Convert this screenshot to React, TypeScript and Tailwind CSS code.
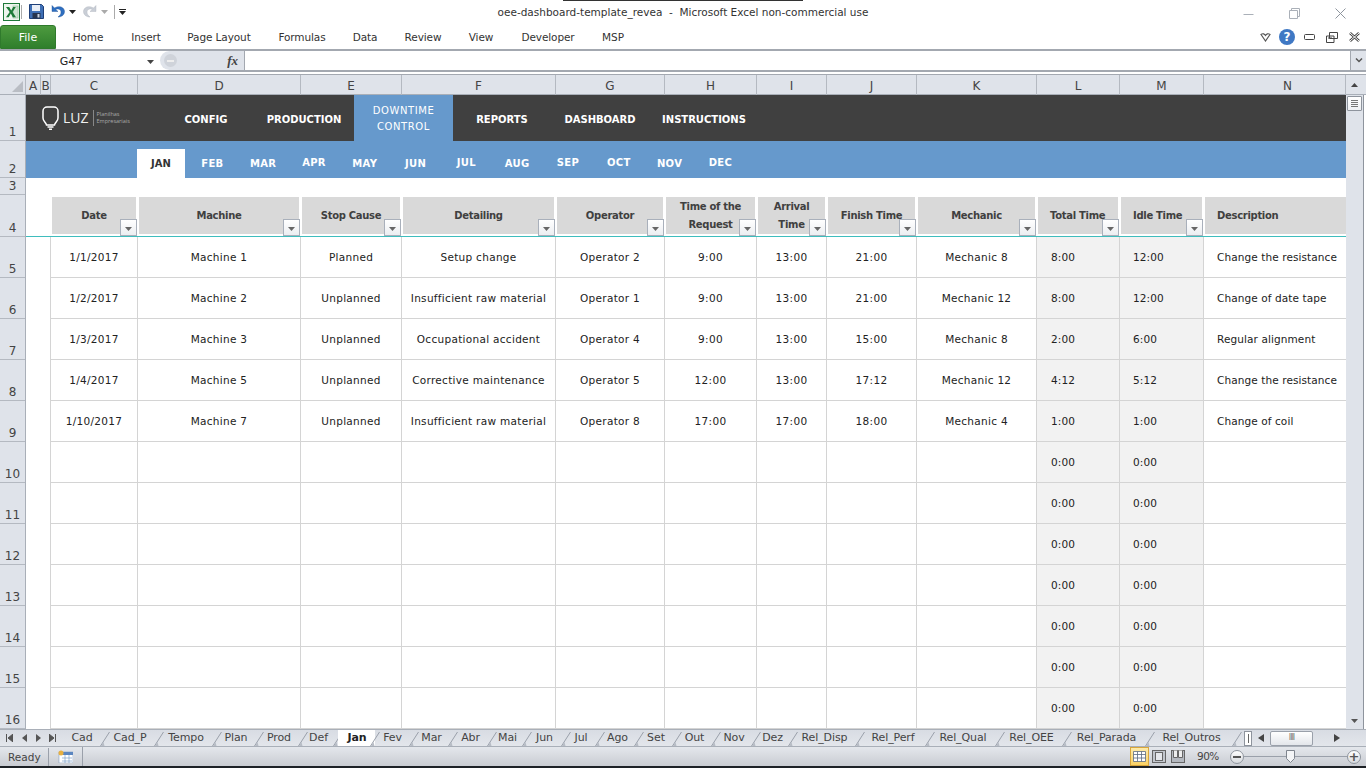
import type { ReactNode } from 'react'

const colLetters = ['A', 'B', 'C', 'D', 'E', 'F', 'G', 'H', 'I', 'J', 'K', 'L', 'M', 'N']

const grid = 'grid grid-cols-[15px_10px_87px_163px_101px_154px_109px_92px_70px_90px_120px_83px_84px_142px]'

const ribbonTabs = [
  ['Home', 'w-[64px]'], ['Insert', 'w-[52px]'], ['Page Layout', 'w-[94px]'], ['Formulas', 'w-[72px]'], ['Data', 'w-[54px]'],
  ['Review', 'w-[62px]'], ['View', 'w-[54px]'], ['Developer', 'w-[80px]'], ['MSP', 'w-[50px]'],
]

const rowHeaders = [
  ['1', 'h-[46px]'], ['2', 'h-[37px]'], ['3', 'h-[17px]'], ['4', 'h-[42px]'],
  ['5', 'h-[41px]'], ['6', 'h-[41px]'], ['7', 'h-[41px]'], ['8', 'h-[41px]'], ['9', 'h-[41px]'], ['10', 'h-[41px]'],
  ['11', 'h-[41px]'], ['12', 'h-[41px]'], ['13', 'h-[41px]'], ['14', 'h-[41px]'], ['15', 'h-[41px]'], ['16', 'h-[41px]'],
]

const months: [string, boolean][] = [
  ['FEB', false], ['MAR', false], ['APR', true], ['MAY', false], ['JUN', false], ['JUL', true],
  ['AUG', false], ['SEP', true], ['OCT', true], ['NOV', false], ['DEC', true],
]

const headers = [
  { label: 'Date' },
  { label: 'Machine' },
  { label: 'Stop Cause' },
  { label: 'Detailing' },
  { label: 'Operator' },
  { label: 'Time of the Request', wrap: true },
  { label: 'Arrival Time', wrap: true },
  { label: 'Finish Time' },
  { label: 'Mechanic' },
  { label: 'Total Time', left: true },
  { label: 'Idle Time', left: true },
  { label: 'Description', left: true, noFilter: true },
]

const data = [
  ['1/1/2017', 'Machine 1', 'Planned', 'Setup change', 'Operator 2', '9:00', '13:00', '21:00', 'Mechanic 8', '8:00', '12:00', 'Change the resistance'],
  ['1/2/2017', 'Machine 2', 'Unplanned', 'Insufficient raw material', 'Operator 1', '9:00', '13:00', '21:00', 'Mechanic 12', '8:00', '12:00', 'Change of date tape'],
  ['1/3/2017', 'Machine 3', 'Unplanned', 'Occupational accident', 'Operator 4', '9:00', '13:00', '15:00', 'Mechanic 8', '2:00', '6:00', 'Regular alignment'],
  ['1/4/2017', 'Machine 5', 'Unplanned', 'Corrective maintenance', 'Operator 5', '12:00', '13:00', '17:12', 'Mechanic 12', '4:12', '5:12', 'Change the resistance'],
  ['1/10/2017', 'Machine 7', 'Unplanned', 'Insufficient raw material', 'Operator 8', '17:00', '17:00', '18:00', 'Mechanic 4', '1:00', '1:00', 'Change of coil'],
  ...Array.from({ length: 7 }, () => ['', '', '', '', '', '', '', '', '', '0:00', '0:00', '']),
]

const sheetTabs = [
  ['Cad', 'w-[42px]'], ['Cad_P', 'w-[54px]'], ['Tempo', 'w-[58px]'], ['Plan', 'w-[42px]'], ['Prod', 'w-[44px]'], ['Def', 'w-[35px]'],
  ['Jan', 'w-[37px]'], ['Fev', 'w-[39px]'], ['Mar', 'w-[39px]'], ['Abr', 'w-[39px]'], ['Mai', 'w-[35px]'], ['Jun', 'w-[39px]'],
  ['Jul', 'w-[34px]'], ['Ago', 'w-[39px]'], ['Set', 'w-[38px]'], ['Out', 'w-[39px]'], ['Nov', 'w-[40px]'], ['Dez', 'w-[37px]'],
  ['Rel_Disp', 'w-[67px]'], ['Rel_Perf', 'w-[70px]'], ['Rel_Qual', 'w-[70px]'], ['Rel_OEE', 'w-[67px]'], ['Rel_Parada', 'w-[83px]'], ['Rel_Outros', 'w-[87px]'],
]

function ExcelIcon() {
  return (
    <svg width="18" height="18" viewBox="0 0 18 18">
      <rect x="0.5" y="0.5" width="16" height="17" fill="#eef5ee" stroke="#1f7a3a" />
      <rect x="10" y="3" width="5" height="12" fill="#cfe5d2" stroke="#7fb08a" strokeWidth="0.5" />
      <path d="M3 4h3.2l2 3.4L10.2 4h2.6L9.6 9l3.4 5.2H9.8L7.8 10.6 5.7 14.2H3l3.7-5.2z" fill="#1d7a37" />
    </svg>
  )
}

function SaveIcon() {
  return (
    <svg width="15" height="15" viewBox="0 0 15 15">
      <path d="M0.5 0.5h12l2 2v12h-14z" fill="#3f6fb5" stroke="#1f3f78" />
      <rect x="3" y="1" width="8" height="6" fill="#e9eef6" />
      <rect x="3.5" y="9" width="8" height="5.5" fill="#26344f" />
      <rect x="8.5" y="10" width="2" height="3.5" fill="#c8d2e2" />
    </svg>
  )
}

function UndoIcon({ color, dark }: { color: string; dark: string }) {
  return (
    <svg width="14" height="15" viewBox="0 0 14 15">
      <path d="M1 1.5v6h6L4.8 5.4C7 4.2 10 5.2 10 8c0 2-1 3.5-3 5 4 0 6.5-2.5 6.5-5.5C13.5 3.5 8.5 1 3.5 4z" fill={color} stroke={dark} strokeWidth="0.4" />
    </svg>
  )
}

function Caret({ color = '#222', className = '' }: { color?: string; className?: string }) {
  return (
    <svg width="7" height="4" viewBox="0 0 7 4" className={className}>
      <path d="M0 0h7L3.5 4z" fill={color} />
    </svg>
  )
}

function FilterButton() {
  return (
    <div className="absolute right-[1px] bottom-0 flex h-[17px] w-[17px] items-center justify-center border border-[#a9b0bb] bg-gradient-to-b from-white to-[#eceef1]">
      <Caret color="#666" className="mt-[2px]" />
    </div>
  )
}

function Logo() {
  return (
    <div className="flex h-full w-[140px] items-center pl-[16px] pb-[1px]">
      <svg width="17" height="24" viewBox="0 0 17 24">
        <path d="M5 1h7a4 4 0 0 1 4 4v7c0 3.5-3 4-3.5 7h-8C4 16 1 15.5 1 12V5a4 4 0 0 1 4-4z" fill="none" stroke="#fff" strokeWidth="1.5" />
        <path d="M5.5 21h6M7 23.3h3" stroke="#fff" strokeWidth="1.5" />
      </svg>
      <span className="ml-[4px] font-['Open_Sans',sans-serif] text-[14px] leading-none text-[#f0f0f0]">LUZ</span>
      <span className="ml-[4px] mr-[3px] h-[16px] w-px bg-[#888]" />
      <span className="font-['Open_Sans',sans-serif] text-[5.5px] leading-[6.5px] text-[#aaa]">Planilhas<br />Empresariais</span>
    </div>
  )
}

function NavItem({ className, children }: { className: string; children: ReactNode }) {
  return <div className={`flex h-full items-center justify-center pt-[2px] text-[10px] font-bold text-white ${className}`}>{children}</div>
}

function SheetTab({ label, width, active }: { label: string; width: string; active: boolean }) {
  return (
    <div className={`relative flex h-full shrink-0 items-center justify-center text-[11px] tracking-[-0.1px] ${width} ${active ? 'bg-white pl-[1px] font-bold text-[#222]' : 'pr-[4px] text-[#444]'}`}>
      {label}
      <svg width="10" height="15" viewBox="0 0 10 15" className="absolute right-[-5px] bottom-0">
        <path d="M0.5 15L9.5 1" stroke="#9aa0aa" strokeWidth="1" fill="none" />
        <path d="M1 15h3.5L3.5 11z" fill="#b8bdc6" />
      </svg>
    </div>
  )
}

export default function App() {
  return (
    <div className="flex h-[768px] w-[1366px] flex-col overflow-hidden bg-white font-['DejaVu_Sans',sans-serif] text-[#222]">
      {/* title bar */}
      <div className="relative flex h-[25px] shrink-0 items-center justify-center bg-white pt-[1px]">
        <div className="absolute left-[563px] top-0 h-px w-[240px] bg-[#333]" />
        <div className="absolute left-[3px] top-[3px]"><ExcelIcon /></div>
        <div className="absolute left-[21px] top-[5px] h-[14px] w-px bg-[#aaa]" />
        <div className="absolute left-[29px] top-[4px] flex items-center">
          <SaveIcon />
          <span className="ml-[7px]"><UndoIcon color="#2f6fc0" dark="#1d4f96" /></span>
          <Caret className="ml-[4px]" />
          <span className="ml-[7px] -scale-x-100"><UndoIcon color="#c9ced6" dark="#aeb4bd" /></span>
          <Caret color="#aaa" className="ml-[4px]" />
          <span className="ml-[6px] h-[14px] w-px bg-[#aaa]" />
          <div className="ml-[4px] flex flex-col items-center gap-[1px]">
            <span className="h-px w-[7px] bg-[#222]" />
            <Caret />
          </div>
        </div>
        <span className="text-[10.5px] text-[#333]">oee-dashboard-template_revea{'\u00a0 - \u00a0'}Microsoft Excel non-commercial use</span>
        <div className="absolute right-[20px] top-[8px] flex items-center gap-[35px]">
          <svg width="11" height="11" viewBox="0 0 11 11"><path d="M0.5 6.5h10" stroke="#aab0b8" /></svg>
          <svg width="11" height="11" viewBox="0 0 11 11"><path d="M0.5 2.5h8v8h-8zM2.5 2.5v-2h8v8h-2" fill="none" stroke="#aab0b8" /></svg>
          <svg width="11" height="11" viewBox="0 0 11 11"><path d="M0.5 0.5l10 10M10.5 0.5l-10 10" stroke="#8e959e" /></svg>
        </div>
      </div>

      {/* ribbon tabs */}
      <div className="flex h-[24px] shrink-0 items-center bg-white">
        <div className="flex h-full w-[56px] items-center justify-center rounded-t-[3px] border border-[#2f7a2c] bg-gradient-to-b from-[#4d9a3f] to-[#2f7f2c] pt-[3px] text-[11px] text-white">File</div>
        {ribbonTabs.map(([t, w]) => (
          <div key={t} className={`pt-[2px] text-center text-[10.5px] tracking-[-0.1px] text-[#333] ${w}`}>{t}</div>
        ))}
        <div className="ml-auto flex items-center pr-[6px]">
          <svg width="11" height="9" viewBox="0 0 11 9"><path d="M1 1.5C3 0 4.5 1 5.5 2.5 6.5 1 8 0 10 1.5L5.5 8z" fill="#fff" stroke="#555" strokeWidth="1.2" /></svg>
          <div className="ml-[8px] flex h-[16px] w-[16px] items-center justify-center rounded-full bg-[#3f78c4] text-[12px] font-bold leading-none text-white">?</div>
          <svg width="11" height="6" viewBox="0 0 11 6" className="ml-[9px]"><rect x="0.5" y="0.5" width="10" height="5" rx="1" fill="#fff" stroke="#444" /></svg>
          <svg width="12" height="11" viewBox="0 0 12 11" className="ml-[11px]"><path d="M3.5 0.5h8v6h-8zM0.5 4h7.5v6.5H0.5z" fill="#fff" stroke="#444" /><path d="M2 6h4" stroke="#444" /></svg>
          <svg width="11" height="10" viewBox="0 0 11 10" className="ml-[11px]"><path d="M1 1l9 8M10 1l-9 8" stroke="#444" strokeWidth="2.5" /><path d="M1 1l9 8M10 1l-9 8" stroke="#fff" strokeWidth="1" /></svg>
        </div>
      </div>

      {/* formula bar */}
      <div className="flex h-[23px] shrink-0 items-stretch border-y-2 border-t-[#a3a8b0] border-b-[#a3a8b0] bg-white">
        <div className="relative flex w-[160px] items-center justify-center pr-[18px] pt-[3px] text-[11px]">
          G47
          <Caret color="#444" className="absolute right-[6px] top-[9px]" />
        </div>
        <div className="flex w-[85px] items-center justify-between rounded-l-full border-r border-[#a3a8b0] bg-[#dfe3ea] pl-[4px] pr-[6px]">
          <span className="flex h-[13px] w-[13px] items-center justify-center rounded-full bg-[#cfd3da]"><span className="h-[2px] w-[7px] bg-[#eee]" /></span>
          <span className="font-['Liberation_Serif',serif] text-[13px] font-bold italic leading-none text-[#444]">fx</span>
        </div>
        <div className="flex-1" />
        <div className="flex w-[16px] items-center justify-center border-l border-[#a3a8b0] bg-[#dfe3ea]">
          <svg width="8" height="5" viewBox="0 0 8 5"><path d="M1 0.5l3 3 3-3" fill="none" stroke="#555" strokeWidth="1.5" /></svg>
        </div>
      </div>
      <div className="h-[3px] shrink-0 border-b border-[#a3a8b0] bg-white" />

      {/* column headers */}
      <div className="flex h-[20px] shrink-0 border-b border-[#a9afb8] bg-[#dfe3ea]">
        <div className="flex w-[26px] shrink-0 items-end justify-end border-r border-[#b4b9c1] p-[2px]">
          <svg width="11" height="11" viewBox="0 0 11 11"><path d="M11 0v11H0z" fill="#b9bdc4" /></svg>
        </div>
        <div className={`${grid} w-[1320px] shrink-0`}>
          {colLetters.map(c => (
            <div key={c} className={`flex items-center justify-center border-r border-[#b4b9c1] pt-[2px] text-[12px] text-[#444] ${c === 'N' ? 'pl-[26px]' : ''}`}>{c}</div>
          ))}
        </div>
        <div className="flex w-[17px] items-center justify-center"><Caret color="#444" className="rotate-180" /></div>
      </div>

      {/* sheet */}
      <div className="flex h-[634px] shrink-0 overflow-hidden">
        <div className="w-[26px] shrink-0 border-r border-[#a9afb8] bg-[#dfe3ea]">
          {rowHeaders.map(([n, h]) => (
            <div key={n} className={`flex items-end justify-center border-b border-[#b4b9c1] text-[12px] leading-[15px] text-[#444] ${h}`}>{n}</div>
          ))}
        </div>

        <div className="w-[1320px] shrink-0">
          {/* top nav */}
          <div className="flex h-[46px] items-center bg-[#404040]">
            <Logo />
            <NavItem className="mr-[8px] w-[80px]">CONFIG</NavItem>
            <NavItem className="w-[100px]">PRODUCTION</NavItem>
            <NavItem className="w-[99px] bg-[#6699cc] text-center !font-normal leading-[16px] tracking-[0.6px]">DOWNTIME<br />CONTROL</NavItem>
            <NavItem className="w-[98px]">REPORTS</NavItem>
            <NavItem className="w-[98px]">DASHBOARD</NavItem>
            <NavItem className="w-[110px]">INSTRUCTIONS</NavItem>
          </div>

          {/* months */}
          <div className="flex h-[37px] items-end bg-[#6699cc] pl-[111px]">
            <div className="mr-[2px] flex h-[29px] w-[48px] items-center justify-center bg-white text-[10px] font-bold text-[#333]">JAN</div>
            {months.map(([m, up]) => (
              <div key={m} className={`flex h-[29px] w-[50.8px] items-center justify-center text-[10px] font-bold tracking-[0.3px] text-white ${up ? 'pb-[3px]' : ''}`}>{m}</div>
            ))}
          </div>

          <div className="h-[17px]" />

          {/* table header */}
          <div className={`${grid} h-[42px] border-b border-[#3fbdbd]`}>
            <div />
            <div />
            {headers.map(h => (
              <div key={h.label} className="relative py-[2px]">
                <div className={`ml-[1px] flex h-full items-center bg-[#d9d9d9] pt-[1px] text-[10px] font-bold leading-[18px] tracking-[-0.3px] text-[#404040] ${h.noFilter ? '' : 'mr-[2px]'} ${h.left ? 'justify-start pl-[12px]' : 'justify-center text-center'} ${h.wrap ? 'px-[10px]' : ''}`}>
                  {h.label}
                </div>
                {!h.noFilter && <FilterButton />}
              </div>
            ))}
          </div>

          {/* rows */}
          {data.map((row, i) => (
            <div key={i} className={`${grid} h-[41px]`}>
              <div />
              <div className="border-r border-[#d4d4d4]" />
              {row.map((cell, j) => (
                <div
                  key={j}
                  className={`flex items-center border-b border-[#d4d4d4] pt-[1px] text-[10.5px] ${j < 9 ? 'justify-center border-r tracking-[0.3px]' : ''} ${j === 9 ? 'border-r bg-[#f2f2f2] pl-[14px] tracking-[0.1px]' : ''} ${j === 10 ? 'border-r bg-[#f2f2f2] pl-[13px] tracking-[0.1px]' : ''} ${j === 11 ? 'pl-[13px] tracking-[0.1px]' : ''}`}
                >
                  {cell}
                </div>
              ))}
            </div>
          ))}
        </div>

        {/* vertical scrollbar */}
        <div className="relative flex w-[17px] shrink-0 flex-col items-center bg-[#dfe3ea] pt-[1px]">
          <div className="flex h-[15px] w-[15px] flex-col items-center justify-center gap-[1px] rounded-[1px] border border-[#8e949d] bg-gradient-to-b from-white to-[#eef0f3]">
            <span className="h-px w-[7px] bg-[#777]" />
            <span className="h-px w-[7px] bg-[#777]" />
            <span className="h-px w-[7px] bg-[#777]" />
            <span className="h-px w-[7px] bg-[#777]" />
          </div>
          <Caret color="#555" className="absolute bottom-[6px]" />
        </div>
        <div className="w-[1px] shrink-0 bg-[#8e949d]" />
        <div className="flex-1 bg-white" />
      </div>

      {/* sheet tabs */}
      <div className="flex h-[17px] shrink-0 items-stretch border-t border-[#a9afb8] bg-gradient-to-b from-[#d8dce3] to-[#e3e6eb]">
        <div className="flex w-[63px] shrink-0 items-center gap-[7px] pl-[6px]">
          <svg width="7" height="8" viewBox="0 0 7 8"><path d="M0.5 0v8M7 0v8L2 4z" stroke="#555" fill="#555" /></svg>
          <svg width="7" height="8" viewBox="0 0 7 8" className="ml-[1px]"><path d="M6 0v8L1 4z" fill="#555" /></svg>
          <svg width="7" height="8" viewBox="0 0 7 8"><path d="M1 0v8l5-4z" fill="#555" /></svg>
          <svg width="7" height="8" viewBox="0 0 7 8"><path d="M0 0v8l5-4zM6.5 0v8" stroke="#555" fill="#555" /></svg>
        </div>
        {sheetTabs.map(([t, w]) => <SheetTab key={t} label={t} width={w} active={t === 'Jan'} />)}
        <div className="ml-[7px] mt-[1px] flex w-[8px] shrink-0 items-center justify-center border border-[#8e949d] bg-white"><span className="h-[9px] w-px bg-[#666]" /></div>
        <div className="ml-[6px] flex w-[88px] shrink-0 items-center">
          <svg width="6" height="8" viewBox="0 0 6 8"><path d="M6 0v8L0 4z" fill="#444" /></svg>
          <div className="ml-[6px] flex h-[15px] w-[43px] items-center justify-center rounded-[2px] border border-[#9aa0aa] bg-gradient-to-b from-white to-[#e3e6eb]">
            <span className="text-[8px] leading-none tracking-[-1px] text-[#777]">IIII</span>
          </div>
          <svg width="6" height="8" viewBox="0 0 6 8" className="ml-auto mr-[6px]"><path d="M0 0v8l6-4z" fill="#444" /></svg>
        </div>
        <div className="flex-1" />
      </div>

      {/* status bar */}
      <div className="flex h-[20px] shrink-0 items-center border-t border-[#a9afb8] bg-gradient-to-b from-[#e4e7ec] to-[#c9ccd2] text-[10.5px] text-[#444]">
        <span className="w-[49px] border-r border-[#9aa0aa] pl-[8px] leading-[18px]">Ready</span>
        <div className="flex h-full w-[34px] items-center justify-center border-r border-[#9aa0aa]">
          <svg width="15" height="13" viewBox="0 0 15 13">
            <rect x="1" y="2" width="14" height="11" fill="#fff" stroke="#6f8fb8" strokeWidth="0.5" />
            <rect x="1" y="2" width="14" height="3" fill="#5b86c0" />
            <path d="M4 8h10M4 11h10M7 5v8M11 5v8" stroke="#7fa0c8" strokeWidth="0.7" />
            <circle cx="3" cy="3" r="2.5" fill="#e8b040" />
          </svg>
        </div>
        <div className="ml-auto flex h-full items-center">
          <div className="flex h-[19px] w-[19px] items-center justify-center border border-[#d8a63c] bg-gradient-to-b from-[#fdeaa8] to-[#fbd264]">
            <svg width="13" height="11" viewBox="0 0 13 11"><path d="M0.5 0.5h12v10h-12zM0.5 3.500h12M0.5 7h12M4.5 0.5v10M8.5 0.5v10" fill="#fff" stroke="#5a6a80" strokeWidth="0.8" /></svg>
          </div>
          <svg width="14" height="13" viewBox="0 0 14 13" className="ml-[3px]"><rect x="0.5" y="0.5" width="13" height="12" fill="#c2c6cd" stroke="#666" /><rect x="3.5" y="2.5" width="7" height="8" fill="#e6e8ec" stroke="#666" /></svg>
          <svg width="14" height="13" viewBox="0 0 14 13" className="ml-[5px]"><rect x="0.5" y="0.5" width="13" height="12" fill="#b4b8bf" stroke="#666" /><path d="M2.5 0.5v7h4v-7M7.5 0.5v7h4v-7" fill="#eee" stroke="#666" /></svg>
          <span className="ml-[12px] w-[33px] text-[10.5px] tracking-[-0.5px]">90%</span>
          <div className="flex h-[14px] w-[14px] items-center justify-center rounded-full border border-[#8e949d] bg-gradient-to-b from-white to-[#d7dade]"><span className="h-[2px] w-[8px] bg-[#555]" /></div>
          <div className="relative flex h-full w-[103px] items-center">
            <div className="h-px w-full bg-[#9aa0aa]" />
            <svg width="9" height="13" viewBox="0 0 9 13" className="absolute left-[42px] top-[3px]"><path d="M0.5 0.5h8v8l-4 4-4-4z" fill="#f4f5f7" stroke="#7f858e" /></svg>
          </div>
          <div className="mr-[5px] flex h-[14px] w-[14px] items-center justify-center rounded-full border border-[#8e949d] bg-gradient-to-b from-white to-[#d7dade] text-[13px] font-bold leading-none text-[#555]">+</div>
        </div>
      </div>
      <div className="flex-1 bg-[#1d2126]" />
    </div>
  )
}
